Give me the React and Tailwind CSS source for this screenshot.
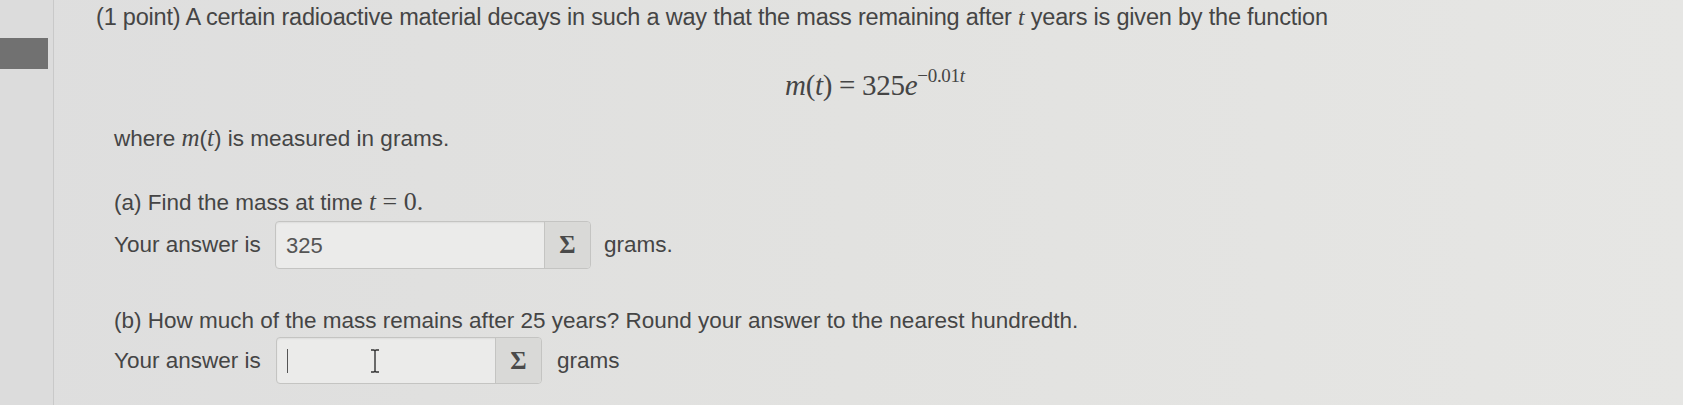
import React from 'react';

const Sigma = () => (
  <span className="font-['Liberation_Serif',serif] text-[25px] font-bold text-[#4a4a4a]">Σ</span>
);

const AnswerBox = ({ value, width, children }) => (
  <div className={`flex h-full ${width} rounded-[4px] border border-[#c4c4c2] bg-[#ebebea] shadow-[inset_0_1px_2px_rgba(0,0,0,0.06)]`}>
    <div className="relative flex flex-1 items-center px-[10px] text-[22px] text-[#555]">
      {value}
      {children}
    </div>
    <div className="flex w-[46px] items-center justify-center rounded-r-[4px] border-l border-[#c4c4c2] bg-[#d9d9d7]">
      <Sigma />
    </div>
  </div>
);

const App = () => {
  return (
    <div className="flex h-[405px] w-[1683px] overflow-hidden bg-gradient-to-r from-[#dedede] via-[#e2e2e0] to-[#e6e6e4] font-['Liberation_Sans',Arial,sans-serif] text-[#454545]">
      <div className="w-[54px] shrink-0 border-r border-[#c9c9c9] bg-[#dcdcdc]">
        <div className="mt-[38px] h-[31px] w-[48px] bg-[#717171]" />
      </div>
      <div className="flex-1 pl-[42px]">
        <p className="whitespace-nowrap pt-[5px] text-[23.5px] leading-[24px] tracking-[-0.2px]">
          (1 point) A certain radioactive material decays in such a way that the mass remaining after{' '}
          <i className="font-['Liberation_Serif',serif]">t</i> years is given by the function
        </p>
        <div className="mt-[44px] flex h-[24px] items-center pl-[689px] font-['Liberation_Serif',serif] text-[29px] leading-[24px] tracking-[-0.3px]">
          <i>m</i>(<i>t</i>)&nbsp;=&nbsp;325<i>e</i>
          <sup className="relative -top-[9px] text-[19px]">−0.01<i>t</i></sup>
        </div>
        <div className="pl-[18px]">
          <p className="mt-[29px] h-[24px] text-[22.5px] leading-[24px]">
            where <i className="font-['Liberation_Serif',serif] text-[25px]">m</i>(<i className="font-['Liberation_Serif',serif] text-[25px]">t</i>) is measured in grams.
          </p>
          <p className="mt-[40px] h-[24px] text-[22.5px] leading-[24px]">
            (a) Find the mass at time <i className="font-['Liberation_Serif',serif] text-[25px]">t</i>
            <span className="font-['Liberation_Serif',serif] text-[26px]"> = 0.</span>
          </p>
          <div className="mt-[7px] flex h-[48px] items-center">
            <span className="w-[161px] text-[22.5px]">Your answer is</span>
            <AnswerBox value="325" width="w-[316px]" />
            <span className="ml-[13px] text-[22.5px]">grams.</span>
          </div>
          <p className="mt-[40px] h-[24px] whitespace-nowrap text-[22.5px] leading-[24px]">
            (b) How much of the mass remains after 25 years? Round your answer to the nearest hundredth.
          </p>
          <div className="mt-[4px] flex h-[47px] items-center">
            <span className="w-[162px] text-[22.5px]">Your answer is</span>
            <AnswerBox value="" width="w-[266px]">
              <span className="h-[24px] w-px bg-[#555]" />
              <svg className="absolute left-[92px] top-[11px]" width="12" height="24" viewBox="0 0 12 24">
                <path d="M2 1h3l1 1 1-1h3M6 2v20M2 23h3l1-1 1 1h3" fill="none" stroke="#333" strokeWidth="1.4" />
              </svg>
            </AnswerBox>
            <span className="ml-[15px] text-[22.5px]">grams</span>
          </div>
        </div>
      </div>
    </div>
  );
};

export default App;
